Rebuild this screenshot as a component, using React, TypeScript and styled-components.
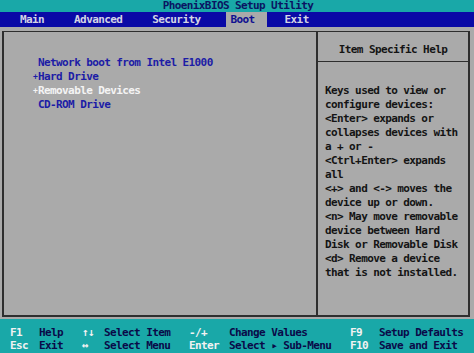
import React from "react";
import styled, { createGlobalStyle } from "styled-components";

const GlobalStyle = createGlobalStyle`
    html, body {
        margin: 0;
        padding: 0;
        background: #aaaaaa;
    }
    #root {
        width: 474px;
        height: 353px;
        overflow: hidden;
    }
`;

const bios = `"DejaVu Sans Mono", "Liberation Mono", monospace`;

interface BootItem {
    label: string;
    bullet: string;
    selected?: boolean;
}

const bootItems: BootItem[] = [
    { label: "Network boot from Intel E1000", bullet: "" },
    { label: "Hard Drive", bullet: "+" },
    { label: "Removable Devices", bullet: "+", selected: true },
    { label: "CD-ROM Drive", bullet: "" },
];

const helpLines = [
    "Keys used to view or",
    "configure devices:",
    "<Enter> expands or",
    "collapses devices with",
    "a + or -",
    "<Ctrl+Enter> expands",
    "all",
    "<+> and <-> moves the",
    "device up or down.",
    "<n> May move removable",
    "device between Hard",
    "Disk or Removable Disk",
    "<d> Remove a device",
    "that is not installed.",
];

const menus = ["Main", "Advanced", "Security", "Boot", "Exit"];

const footerRows = [
    ["F1", "Help", "↑↓", "Select Item", "-/+", "Change Values", "F9", "Setup Defaults"],
    ["Esc", "Exit", "↔", "Select Menu", "Enter", "Select ▸ Sub-Menu", "F10", "Save and Exit"],
];

export default function App() {
    return (
        <Screen>
            <GlobalStyle />
            <TitleBar>PhoenixBIOS Setup Utility</TitleBar>
            <MenuBar>
                {menus.map((m) => (
                    <MenuItem key={m} $active={m === "Boot"}>
                        {m}
                    </MenuItem>
                ))}
            </MenuBar>
            <Body>
                <Frame>
                    <BootList>
                        {bootItems.map((item) => (
                            <BootRow key={item.label} $selected={item.selected}>
                                <Bullet>{item.bullet}</Bullet>
                                {item.label}
                            </BootRow>
                        ))}
                    </BootList>
                    <HelpPanel>
                        <HelpTitle>Item Specific Help</HelpTitle>
                        <HelpText>
                            {helpLines.map((line, i) => (
                                <HelpLine key={i}>{line}</HelpLine>
                            ))}
                        </HelpText>
                    </HelpPanel>
                </Frame>
            </Body>
            <Footer>
                {footerRows.map((row, r) =>
                    row.map((cell, c) => (
                        <FooterCell key={`${r}-${c}`} $key={c % 2 === 0}>
                            {cell}
                        </FooterCell>
                    ))
                )}
            </Footer>
        </Screen>
    );
}

const Screen = styled.div`
    width: 474px;
    height: 353px;
    display: flex;
    flex-direction: column;
    font-family: ${bios};
    font-weight: bold;
    font-size: 11px;
    letter-spacing: -0.6px;
    background: #aaaaaa;
`;

const TitleBar = styled.div`
    height: 12px;
    line-height: 12px;
    background: #19a8a8;
    color: #0a1462;
    text-align: center;
    padding-left: 2px;
`;

const MenuBar = styled.div`
    height: 15px;
    background: #0a0aa6;
    display: flex;
    align-items: stretch;
    padding-left: 16px;
`;

const MenuItem = styled.div<{ $active?: boolean }>`
    line-height: 15px;
    padding: ${(p) => (p.$active ? "0 12px 0 4px" : "0 4px")};
    margin-right: ${(p) => (p.$active ? "14px" : "22px")};
    color: ${(p) => (p.$active ? "#101090" : "#d4d4e4")};
    background: ${(p) => (p.$active ? "#aaaaaa" : "transparent")};
`;

const Body = styled.div`
    height: 292px;
    box-sizing: border-box;
    padding: 4px 4px 2px 2px;
    background: #aaaaaa;
`;

const Frame = styled.div`
    height: 100%;
    box-sizing: border-box;
    border: 2px solid #2e2e2e;
    border-top-width: 1px;
    display: grid;
    grid-template-columns: 312px 1fr;
`;

const BootList = styled.div`
    padding: 24px 0 0 28px;
`;

const BootRow = styled.div<{ $selected?: boolean }>`
    height: 14px;
    line-height: 14px;
    display: flex;
    color: ${(p) => (p.$selected ? "#f4f4f4" : "#1c1ca6")};
`;

const Bullet = styled.span`
    width: 6px;
    font-size: 8px;
    text-align: center;
`;

const HelpPanel = styled.div`
    border-left: 2px solid #2e2e2e;
    display: flex;
    flex-direction: column;
`;

const HelpTitle = styled.div`
    height: 30px;
    box-sizing: border-box;
    padding-top: 11px;
    line-height: 14px;
    text-align: center;
    color: #141414;
    border-bottom: 1px solid #2e2e2e;
`;

const HelpText = styled.div`
    padding: 22px 0 0 7px;
    color: #141414;
`;

const HelpLine = styled.div`
    height: 14px;
    line-height: 14px;
    white-space: pre;
`;

const Footer = styled.div`
    flex: 1;
    background: #19a8a8;
    display: grid;
    grid-template-columns: 29px 43px 22px 85px 40px 121px 29px auto;
    grid-auto-rows: 13px;
    align-content: center;
    padding-left: 10px;
    padding-top: 5px;
`;

const FooterCell = styled.div<{ $key?: boolean }>`
    line-height: 13px;
    white-space: nowrap;
    color: ${(p) => (p.$key ? "#f2f2f2" : "#0a0a48")};
`;
